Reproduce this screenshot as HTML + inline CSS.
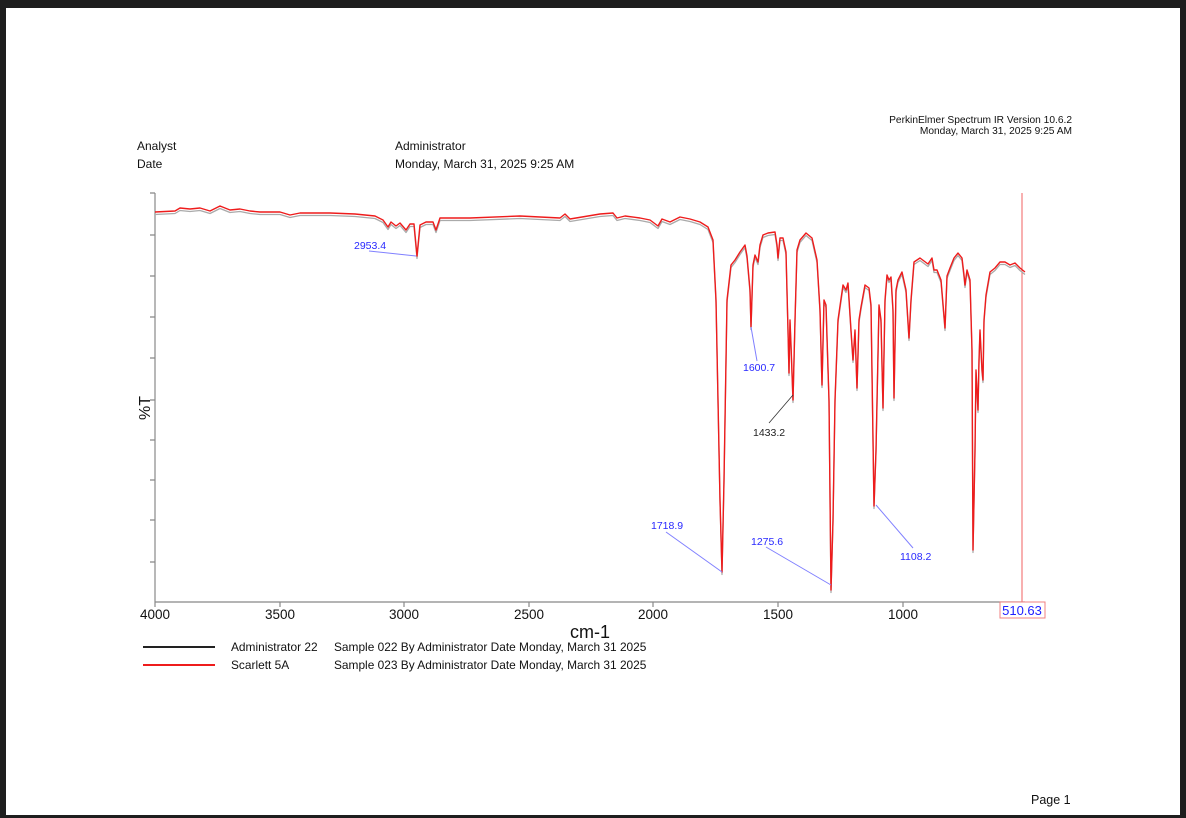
<!DOCTYPE html>
<html><head><meta charset="utf-8"><style>
html,body{margin:0;padding:0;}
body{width:1186px;height:818px;background:#1e1e1e;position:relative;overflow:hidden;font-family:"Liberation Sans",Arial,sans-serif;}
.page{position:absolute;left:6px;top:8px;width:1174px;height:807px;background:#fff;}
.t{position:absolute;font-size:12px;color:#111;white-space:nowrap;}
svg{position:absolute;left:0;top:0;}
</style></head><body>
<div class="page"></div>
<div class="t" style="left:137px;top:139px">Analyst</div>
<div class="t" style="left:137px;top:157px">Date</div>
<div class="t" style="left:395px;top:139px">Administrator</div>
<div class="t" style="left:395px;top:157px">Monday, March 31, 2025 9:25 AM</div>
<div class="t" style="left:800px;top:115px;font-size:10.2px;text-align:right;width:272px;line-height:11px">PerkinElmer Spectrum IR Version 10.6.2<br>Monday, March 31, 2025 9:25 AM</div>
<div class="t" style="left:1031px;top:793px;font-size:12.5px">Page 1</div>
<svg width="1186" height="818" xmlns="http://www.w3.org/2000/svg" font-family="Liberation Sans, Arial, sans-serif">
<g stroke="#888" stroke-width="1.2" fill="none">
<line x1="155" y1="193" x2="155" y2="602"/>
<line x1="155" y1="602" x2="1025" y2="602"/>
<path d="M150 193H155M150 235H155M150 276H155M150 317H155M150 358H155M150 400H155M150 440H155M150 480H155M150 520H155M150 562H155"/>
<path d="M155 602V607M280 602V607M404 602V607M529 602V607M653 602V607M778 602V607M903 602V607"/>
</g>
<g font-size="13.5" fill="#111" text-anchor="middle">
<text x="155" y="619">4000</text><text x="280" y="619">3500</text><text x="404" y="619">3000</text>
<text x="529" y="619">2500</text><text x="653" y="619">2000</text><text x="778" y="619">1500</text><text x="903" y="619">1000</text>
</g>
<text x="590" y="638" font-size="18" fill="#111" text-anchor="middle">cm-1</text>
<text x="150" y="408" font-size="16" fill="#111" text-anchor="middle" transform="rotate(-90 150 408)">%T</text>
<line x1="1022" y1="193" x2="1022" y2="602" stroke="#f06060" stroke-width="1"/>
<rect x="1000" y="602" width="45" height="16" fill="#fff" stroke="#f08080"/>
<text x="1022" y="615" font-size="13" fill="#2020ff" text-anchor="middle">510.63</text>
<g fill="none" stroke-linejoin="round">
<polyline stroke="#aaa" stroke-width="1.3" transform="translate(0,2.5)" points="155,212 175,211 180,208 190,209 200,208 210,211 220,206 230,210 240,209 250,211 260,212 270,212 280,212 290,215 300,213 330,213 355,214 375,216 383,220 388,227 391,222 396,226 400,223 406,230 410,224 414,224 417,256 420,225 426,222 433,222 436,230 440,218 470,218 520,216 560,218 565,214 570,219 600,214 613,213 617,218 625,216 640,218 650,220 658,226 662,219 670,222 680,217 690,219 700,222 708,227 713,240 716,300 720,500 722,572 724,480 727,300 731,265 735,260 740,252 745,245 747,256 750,290 751,327 753,265 755,255 758,262 760,245 763,235 768,233 775,232 777,245 778,258 780,238 783,238 786,252 788,330 789,373 790,320 791,345 793,400 795,320 797,250 800,240 806,233 812,238 817,260 820,310 822,385 824,300 826,305 829,400 831,590 833,520 835,400 838,320 843,285 846,290 848,283 851,330 853,360 855,330 857,388 859,320 861,307 865,285 869,288 871,305 874,506 876,450 879,305 881,320 883,408 885,300 887,275 889,280 891,277 893,310 894,398 896,290 898,280 902,272 906,290 909,338 911,300 914,262 920,258 928,264 932,258 934,270 937,270 941,280 945,328 947,276 950,268 954,258 958,253 962,258 964,275 965,285 967,270 970,280 972,350 973,550 975,450 976,370 978,410 979,360 980,330 982,370 983,380 984,320 986,295 990,272 995,268 1000,262 1005,262 1010,265 1015,263 1020,268 1025,272"/>
<polyline stroke="#ee1c1c" stroke-width="1.4" points="155,212 175,211 180,208 190,209 200,208 210,211 220,206 230,210 240,209 250,211 260,212 270,212 280,212 290,215 300,213 330,213 355,214 375,216 383,220 388,227 391,222 396,226 400,223 406,230 410,224 414,224 417,256 420,225 426,222 433,222 436,230 440,218 470,218 520,216 560,218 565,214 570,219 600,214 613,213 617,218 625,216 640,218 650,220 658,226 662,219 670,222 680,217 690,219 700,222 708,227 713,240 716,300 720,500 722,572 724,480 727,300 731,265 735,260 740,252 745,245 747,256 750,290 751,327 753,265 755,255 758,262 760,245 763,235 768,233 775,232 777,245 778,258 780,238 783,238 786,252 788,330 789,373 790,320 791,345 793,400 795,320 797,250 800,240 806,233 812,238 817,260 820,310 822,385 824,300 826,305 829,400 831,590 833,520 835,400 838,320 843,285 846,290 848,283 851,330 853,360 855,330 857,388 859,320 861,307 865,285 869,288 871,305 874,506 876,450 879,305 881,320 883,408 885,300 887,275 889,280 891,277 893,310 894,398 896,290 898,280 902,272 906,290 909,338 911,300 914,262 920,258 928,264 932,258 934,270 937,270 941,280 945,328 947,276 950,268 954,258 958,253 962,258 964,275 965,285 967,270 970,280 972,350 973,550 975,450 976,370 978,410 979,360 980,330 982,370 983,380 984,320 986,295 990,272 995,268 1000,262 1005,262 1010,265 1015,263 1020,268 1025,272"/>
</g>
<g stroke="#8080ff" stroke-width="1" fill="none">
<line x1="369" y1="251" x2="416" y2="256"/>
<line x1="751" y1="327" x2="757" y2="361"/>
<line x1="666" y1="532" x2="722" y2="572"/>
<line x1="766" y1="547" x2="831" y2="585"/>
<line x1="876" y1="505" x2="913" y2="548"/>
</g>
<line x1="769" y1="423" x2="793" y2="395" stroke="#333" stroke-width="0.8"/>
<g font-size="10.5" fill="#2828ff">
<text x="354" y="249">2953.4</text>
<text x="743" y="371">1600.7</text>
<text x="651" y="529">1718.9</text>
<text x="751" y="545">1275.6</text>
<text x="900" y="560">1108.2</text>
</g>
<text x="753" y="436" font-size="10.5" fill="#222">1433.2</text>
<line x1="143" y1="647" x2="215" y2="647" stroke="#222" stroke-width="2"/>
<line x1="143" y1="665" x2="215" y2="665" stroke="#ee1c1c" stroke-width="2"/>
<g font-size="11.9" fill="#111">
<text x="231" y="651">Administrator 22</text>
<text x="231" y="669">Scarlett 5A</text>
<text x="334" y="651">Sample 022 By Administrator Date Monday, March 31 2025</text>
<text x="334" y="669">Sample 023 By Administrator Date Monday, March 31 2025</text>
</g>
</svg>
</body></html>
